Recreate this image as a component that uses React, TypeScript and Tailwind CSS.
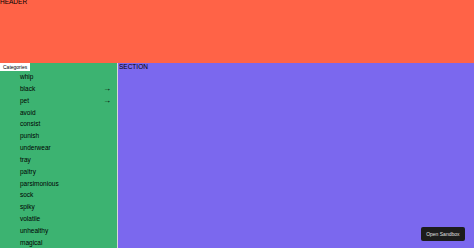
const items = [
  'whip',
  'black',
  'pet',
  'avoid',
  'consist',
  'punish',
  'underwear',
  'tray',
  'paltry',
  'parsimonious',
  'sock',
  'spiky',
  'volatile',
  'unhealthy',
  'magical',
]

const withArrow = ['black', 'pet']

export default function App() {
  return (
    <div className="flex h-[248px] w-[474px] flex-col overflow-hidden font-['Liberation_Sans',Arial,sans-serif] text-black">
      <header className="h-[63px] shrink-0 bg-[#ff6347] text-[6.5px] leading-[4px]">HEADER</header>
      <div className="flex min-h-0 flex-1">
        <aside className="w-[118px] shrink-0 border-r border-[#d8d8d8] bg-[#3cb371]">
          <div className="w-fit bg-white px-[3px] text-[5px] leading-[8px]">Categories</div>
          <ul>
            {items.map((item) => (
              <li key={item} className="flex h-[11.85px] items-center justify-between pl-[20px] pr-[6px] text-[6.5px] leading-[11.85px]">
                <span>{item}</span>
                {withArrow.includes(item) && <span className="text-[8px] leading-none">→</span>}
              </li>
            ))}
          </ul>
        </aside>
        <main className="relative flex-1 bg-[#7b68ee]">
          <div className="pl-px text-[6.5px] leading-[7px]">SECTION</div>
          <button className="absolute bottom-[7px] right-[9px] rounded-[2px] bg-[#1c1c1c] px-[5.5px] py-[3px] text-[5px] leading-[8px] text-[#e0e0e0]">
            Open Sandbox
          </button>
        </main>
      </div>
    </div>
  )
}
